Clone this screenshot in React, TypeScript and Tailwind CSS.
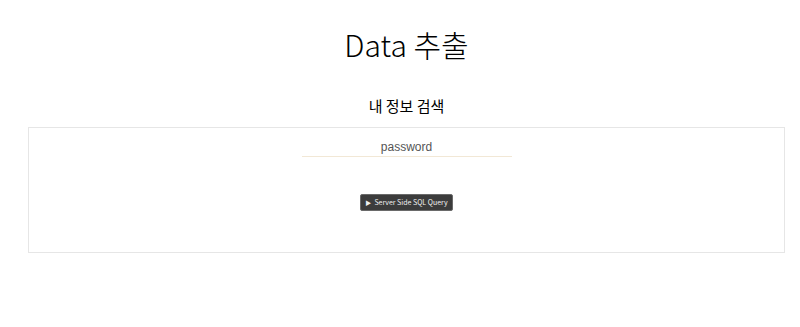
export default function App() {
  return (
    <div className="w-[800px] h-[327px] bg-white font-['Noto_Sans_CJK_KR',sans-serif] text-black">
      <div className="flex flex-col items-center pl-[28px] pr-[15px]">
        <h1 className="mt-[22px] text-[30px] leading-[44px] font-light">Data 추출</h1>
        <h2 className="mt-[29px] text-[15px] leading-[22px]">내 정보 검색</h2>
        <div className="mt-[10px] w-full h-[126px] border border-[#e6e6e6] flex flex-col items-center">
          <input
            type="password"
            placeholder="password"
            className="mt-[10px] w-[210px] h-[19px] border-0 border-b border-b-[#f2e8d6] text-center text-[12px] font-['Liberation_Sans',sans-serif] placeholder:text-[#555] outline-none"
          />
          <button className="mt-[37px] h-[17px] px-[4px] rounded-[2px] bg-[#3c3c3c] border border-[#6a6a6a] text-[#f0f0f0] text-[7px] leading-[15px] flex items-center gap-[3px]">
            <span className="text-[6px]">▶</span>
            <span>Server Side SQL Query</span>
          </button>
        </div>
      </div>
    </div>
  );
}
